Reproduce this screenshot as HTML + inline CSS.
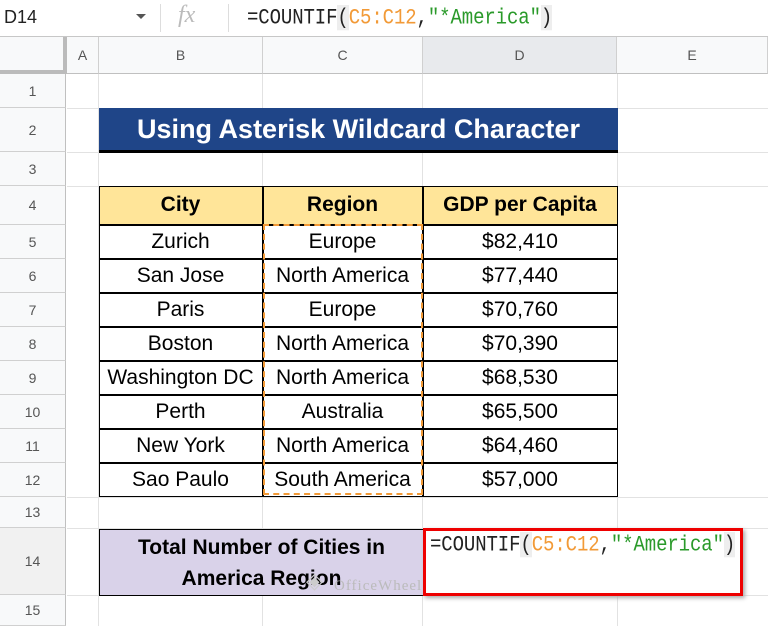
<!DOCTYPE html><html><head><style>
body{margin:0;width:768px;height:626px;overflow:hidden;background:#fff;font-family:"Liberation Sans",Arial,sans-serif;position:relative}
.a{position:absolute}
.rh{position:absolute;left:0;width:66px;text-align:center;color:#555;font-size:14px;border-bottom:1px solid #d0d0d0;background:#f8f9fa;border-right:1px solid #c0c0c0;box-sizing:border-box}
.ch{position:absolute;top:37px;height:37px;line-height:37px;text-align:center;color:#555;font-size:14px;border-right:1px solid #d0d0d0;background:#f8f9fa;box-sizing:border-box;border-bottom:1px solid #c0c0c0}
.gv{position:absolute;top:74px;height:552px;border-left:1px solid #e2e2e2}
.gh{position:absolute;left:67px;width:701px;border-top:1px solid #e2e2e2}
.c{position:absolute;text-align:center;font-size:21px;color:#000;box-sizing:border-box;display:flex;align-items:center;justify-content:center}
.mono{font-family:"Liberation Mono",monospace;transform:scaleY(1.15);transform-origin:top left}
</style></head><body>
<div class="a" style="left:0;top:0;width:768px;height:36px;border-bottom:1px solid #c7c7c7;background:#fff"></div>
<div class="a" style="left:4px;top:7px;font-size:18px;color:#222">D14</div>
<div class="a" style="left:136px;top:14px;width:0;height:0;border-left:5px solid transparent;border-right:5px solid transparent;border-top:5px solid #555"></div>
<div class="a" style="left:160px;top:4px;height:28px;border-left:1px solid #ddd"></div>
<div class="a" style="left:178px;top:2px;font-size:24px;color:#bbb;font-style:italic;font-family:'Liberation Serif',serif">fx</div>
<div class="a" style="left:228px;top:4px;height:28px;border-left:1px solid #ddd"></div>
<div class="a mono" style="left:247px;top:5px;font-size:19px;color:#222;letter-spacing:-0.1px">=COUNTIF<span style="background:#eee">(</span><span style="color:#f29a37">C5:C12</span>,<span style="color:#2a9a2a">"*America"</span><span style="background:#eee">)</span></div>
<div class="ch" style="left:0;width:67px;background:#f8f9fa;border-right:4px solid #bbb;border-bottom:4px solid #bbb"></div>
<div class="ch" style="left:67px;width:32px">A</div>
<div class="ch" style="left:99px;width:164px">B</div>
<div class="ch" style="left:263px;width:160px">C</div>
<div class="ch" style="left:423px;width:194px;background:#e8eaed">D</div>
<div class="ch" style="left:617px;width:151px">E</div>
<div class="gv" style="left:98px"></div><div class="gv" style="left:262px"></div><div class="gv" style="left:422px"></div><div class="gv" style="left:617px"></div>
<div class="gh" style="top:108px"></div><div class="gh" style="top:152px"></div><div class="gh" style="top:186px"></div><div class="gh" style="top:497px"></div><div class="gh" style="top:528px"></div><div class="gh" style="top:595px"></div>
<div class="rh" style="top:74px;height:34px;line-height:34px">1</div>
<div class="rh" style="top:108px;height:44px;line-height:44px">2</div>
<div class="rh" style="top:152px;height:34px;line-height:34px">3</div>
<div class="rh" style="top:186px;height:39px;line-height:39px">4</div>
<div class="rh" style="top:225px;height:34px;line-height:34px">5</div>
<div class="rh" style="top:259px;height:34px;line-height:34px">6</div>
<div class="rh" style="top:293px;height:34px;line-height:34px">7</div>
<div class="rh" style="top:327px;height:34px;line-height:34px">8</div>
<div class="rh" style="top:361px;height:34px;line-height:34px">9</div>
<div class="rh" style="top:395px;height:34px;line-height:34px">10</div>
<div class="rh" style="top:429px;height:34px;line-height:34px">11</div>
<div class="rh" style="top:463px;height:34px;line-height:34px">12</div>
<div class="rh" style="top:497px;height:31px;line-height:31px">13</div>
<div class="rh" style="top:528px;height:67px;line-height:67px;background:#f1f1f1">14</div>
<div class="rh" style="top:595px;height:31px;line-height:31px">15</div>
<div class="c" style="left:99px;top:108px;width:519px;height:45px;background:#1f4588;color:#fff;font-weight:bold;font-size:27px;border-bottom:3px solid #000">Using Asterisk Wildcard Character</div>
<div class="a" style="left:99px;top:186px;width:519px;height:311px;border:1px solid #000;box-sizing:border-box"></div>
<div id="t"></div>
<script>
var rows=[["City","Region","GDP per Capita"],["Zurich","Europe","$82,410"],["San Jose","North America","$77,440"],["Paris","Europe","$70,760"],["Boston","North America","$70,390"],["Washington DC","North America","$68,530"],["Perth","Australia","$65,500"],["New York","North America","$64,460"],["Sao Paulo","South America","$57,000"]];
var xs=[99,263,423,618],h="";
rows.forEach(function(r,i){var top=i==0?186:225+(i-1)*34,ht=i==0?39:34;
r.forEach(function(t,j){h+='<div class="c" style="left:'+xs[j]+'px;top:'+top+'px;width:'+(xs[j+1]-xs[j])+'px;height:'+ht+'px;border:1px solid #000;margin:-0.5px;'+(i==0?'background:#ffe599;font-weight:bold;':'')+'">'+t+'</div>';});});
document.getElementById('t').innerHTML=h;
</script>
<div class="a" style="left:263px;top:224px;width:160px;height:271px;border:2px dashed #f29a37;box-sizing:border-box"></div>
<div class="c" style="left:99px;top:529px;width:325px;height:67px;background:#d9d2e9;border:1px solid #000;font-weight:bold;line-height:31px;font-size:21px">Total Number of Cities in<br>America Region</div>
<div class="a" style="left:423px;top:528px;width:320px;height:68px;border:3px solid #e00;box-sizing:border-box;box-shadow:2px 2px 4px #aaa;background:#fff"></div>
<div class="a mono" style="left:430px;top:532px;font-size:19px;color:#222;letter-spacing:-0.1px">=COUNTIF<span style="background:#eee">(</span><span style="color:#f29a37">C5:C12</span>,<span style="color:#2a9a2a">"*America"</span><span style="background:#eee">)</span></div>
<div class="a" style="left:306px;top:568px;width:24px;height:30px;color:#ccc;font-size:22px">◈</div>
<div class="a" style="left:334px;top:578px;font-size:15px;color:#bbb;font-family:'Liberation Serif',serif;letter-spacing:1px">OfficeWheel</div>
</body></html>
